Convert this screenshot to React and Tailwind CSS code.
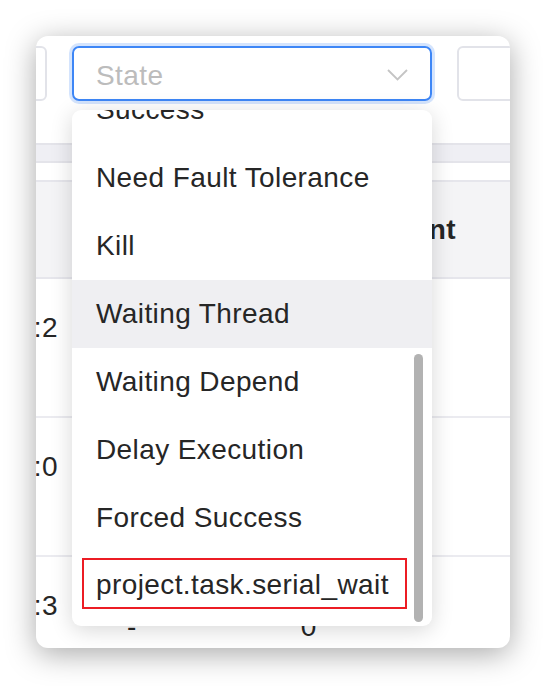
import React from "react";

const items = [
  "Success",
  "Need Fault Tolerance",
  "Kill",
  "Waiting Thread",
  "Waiting Depend",
  "Delay Execution",
  "Forced Success",
];

function Row({ time, last }) {
  return (
    <div className={"flex h-[139px] shrink-0 " + (last ? "" : "border-b-2 border-[#ebebf0]")}>
      <div className="w-[22px] shrink-0 pt-[29px] flex justify-end whitespace-nowrap leading-[40px]">
        {time}
      </div>
      <div className="flex-1 flex items-center">
        <span className="ml-[69px]">-</span>
        <span className="ml-[164px]">0</span>
      </div>
    </div>
  );
}

export default function App() {
  return (
    <div
      className="w-[546px] h-[686px] bg-white pt-[36px] pl-[36px] text-[28px] tracking-[0.4px] text-[#262626]"
      style={{ fontFamily: '"Liberation Sans", Arial, sans-serif' }}
    >
      <div className="relative w-[474px] h-[612px] bg-white rounded-[12px] overflow-hidden shadow-[0_6px_30px_rgba(0,0,0,0.34)] flex flex-col">
        {/* filters */}
        <div className="flex pt-[10px] gap-[26px] shrink-0">
          <div className="w-[100px] -ml-[89px] h-[55px] shrink-0 rounded-md border-2 border-[#e2e3e9] bg-white" />
          <div className="w-[360px] h-[55px] shrink-0 -ml-[1px] rounded-[7px] border-2 border-[#3d86f6] shadow-[0_0_0_3px_rgba(61,134,246,0.22)] flex items-center justify-between pl-[22px] pr-[22px] pt-[4px]">
            <span className="text-[#bcbcbc]">State</span>
            <svg width="21" height="12" viewBox="0 0 21 12" fill="none" className="-mt-[2px]">
              <path d="M1 1l9.5 9.5L20 1" stroke="#c4c4c4" strokeWidth="1.8" />
            </svg>
          </div>
          <div className="w-[200px] h-[55px] shrink-0 -ml-[1px] rounded-md border-2 border-[#e2e3e9] bg-white" />
        </div>

        {/* band */}
        <div className="mt-[42px] h-[20px] shrink-0 bg-[#efeff4] border-y-2 border-[#e4e4ea]" />
        <div className="h-[17px] shrink-0" />

        {/* table */}
        <div className="border-t-2 border-[#e6e6ec] flex flex-col">
          <div className="h-[97px] shrink-0 bg-[#f4f4f6] border-b-2 border-[#e6e6ec] flex items-center">
            <span className="ml-[337px] font-bold">Count</span>
          </div>
          <Row time="0:00:2" />
          <Row time="0:00:0" />
          <Row time="0:00:3" last />
        </div>

        {/* dropdown */}
        <div className="absolute left-[36px] top-[74px] w-[360px] h-[516px] bg-white rounded-[9px] overflow-hidden shadow-[0_4px_22px_rgba(0,0,0,0.16)]">
          <div className="-mt-[34px]">
            {items.map((t) => (
              <div
                key={t}
                className={
                  "h-[68px] flex items-center px-[24px] whitespace-nowrap " +
                  (t === "Waiting Thread" ? "bg-[#efeff2]" : "")
                }
              >
                {t}
              </div>
            ))}
            <div className="h-[68px] pl-[10px] pt-[6px]">
              <div className="w-[325px] h-[51px] border-2 border-[#ec1c24] flex items-center pl-[12px] pt-[2px] whitespace-nowrap">
                project.task.serial_wait
              </div>
            </div>
          </div>
          <div className="absolute left-[342px] top-[244px] w-[9px] h-[268px] rounded-full bg-[#b2b2b2]" />
        </div>
      </div>
    </div>
  );
}
